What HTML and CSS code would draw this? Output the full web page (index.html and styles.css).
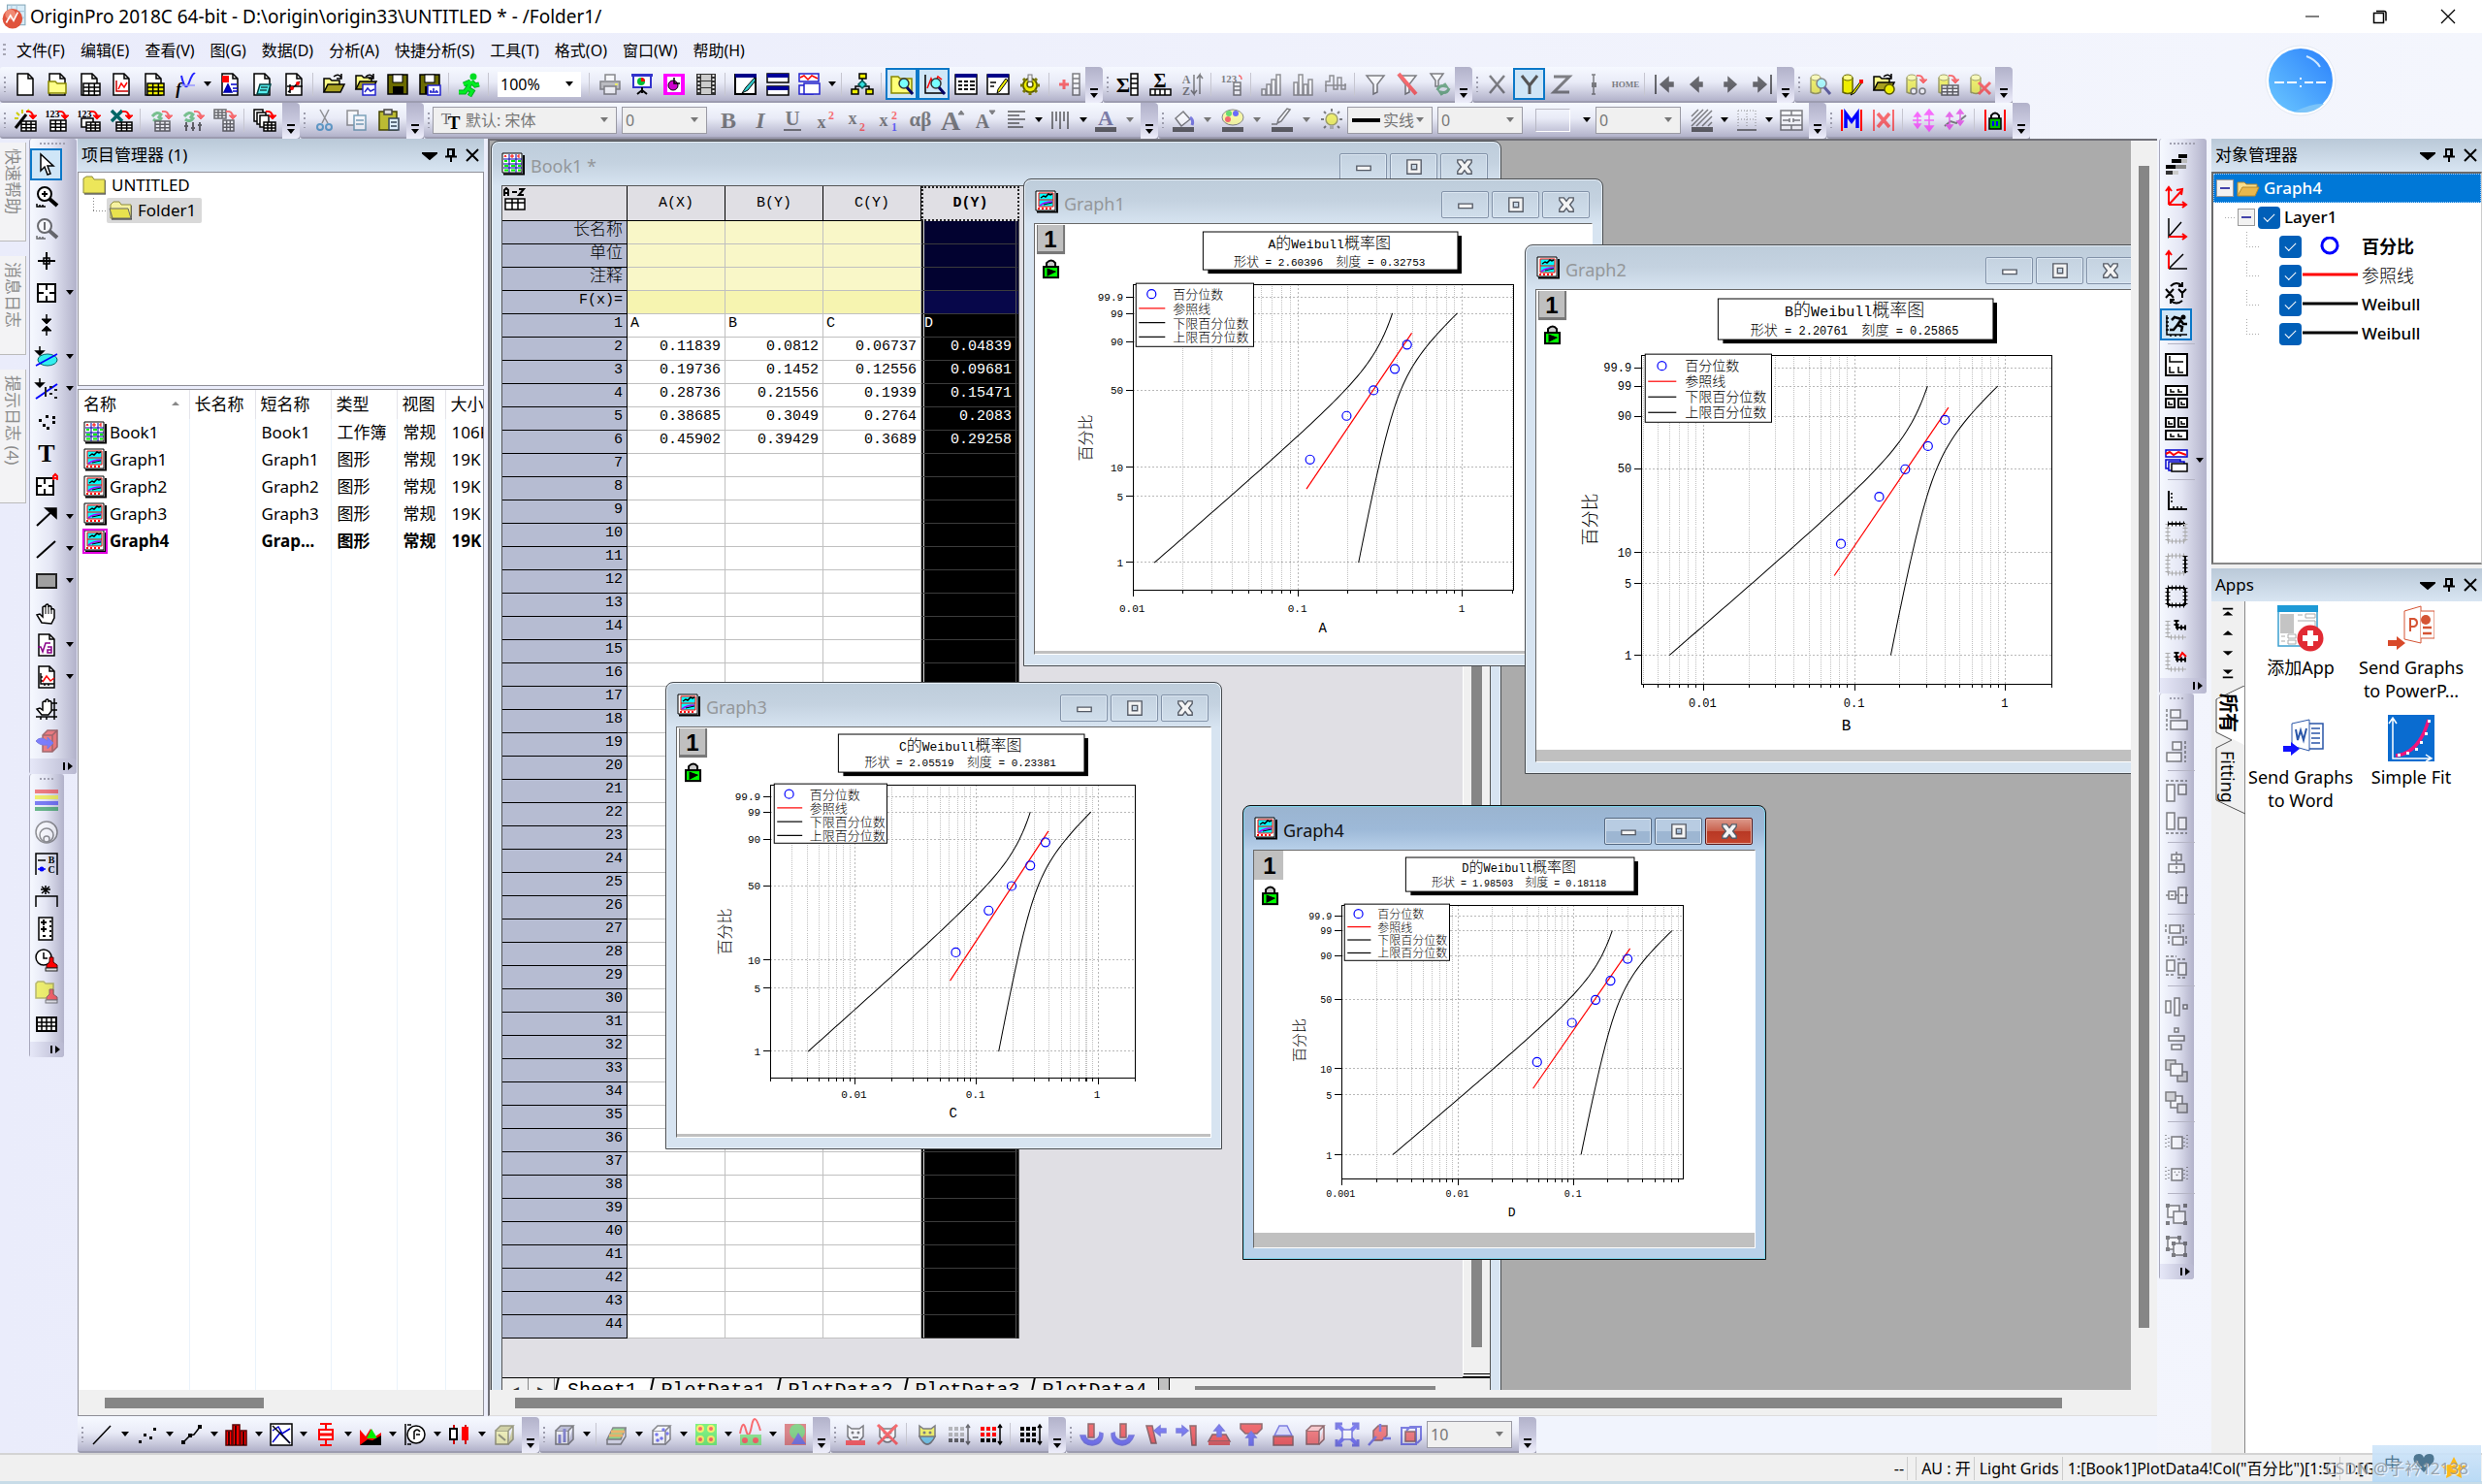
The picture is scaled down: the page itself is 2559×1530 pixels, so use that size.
FILE: index.html
```html
<!DOCTYPE html>
<html lang="zh-CN">
<head>
<meta charset="utf-8">
<title>OriginPro 2018C 64-bit</title>
<link rel="stylesheet" href="styles.css">
</head>
<body>
<header class="titlebar">
  <svg class="app-icon" viewBox="0 0 24 24"><rect x="6" y="1" width="17" height="19" fill="#d8ecf8" stroke="#8ab"/><path d="M10 1v19M15 1v19M6 7h17M6 13h17" stroke="#a9c8dc"/><circle cx="11" cy="14" r="9.500" fill="#e0533c"/><circle cx="9" cy="10" r="5" fill="#f08a74"/><path d="M5 18l4-7 3 5 4-8" stroke="#fff" fill="none" stroke-width="1.500"/></svg>
  <h1>OriginPro 2018C 64-bit - D:\origin\origin33\UNTITLED * - /Folder1/</h1>
  <div class="win-controls">
    <button aria-label="最小化"><svg viewBox="0 0 16 16"><path d="M1 8h14" stroke="#000" fill="none"/></svg></button>
    <button aria-label="还原"><svg viewBox="0 0 16 16"><path d="M1.500 4.500h10v10h-10zM4 2.500h8q2 0 2 2v8" stroke="#000" fill="none" stroke-width="1.500"/></svg></button>
    <button aria-label="关闭"><svg viewBox="0 0 16 16"><path d="M1 1l14 14M15 1L1 15" stroke="#000" fill="none" stroke-width="1.300"/></svg></button>
  </div>
</header>
<nav class="menubar">
  <i class="grip"></i>
  <button>文件(F)</button><button>编辑(E)</button><button>查看(V)</button><button>图(G)</button><button>数据(D)</button><button>分析(A)</button><button>快捷分析(S)</button><button>工具(T)</button><button>格式(O)</button><button>窗口(W)</button><button>帮助(H)</button>
</nav>
<div class="toolrows">
  <div class="toolrow">
    <div class="toolbar" data-items="new newfolder newbook newgraph newmatrix newfx> newlayout newnotes newexcel | open opentpl save savetpl | run | @zoom | print~ slide pink film | edit rows layers> | tree | find! findgraph! worksheet notes gear | addcol~"></div>
    <div class="toolbar" data-items="sumcol sumrow sort~ | setvalues~ | bars1~ bars2~ bars3~ | filter~ nofilter~ refilter~"></div>
    <div class="toolbar" data-items="axisX~ axisY! axisZ~ axisErr~ home~ | first~ prev~ next~ last~"></div>
    <div class="toolbar" data-items="dbfind~ dbedit dbopen dbview~ dbtable~ dbdelete~"></div>
  </div>
  <div class="toolrow padded">
    <div class="toolbar" data-items="wizard import1 import2 importx | redo1~ redo2~ redo3~ | clone"></div>
    <div class="toolbar" data-items="cut~ copy~ paste"></div>
    <div class="toolbar" data-items="@font @size bold~ italic~ underline~ sup~ sub~ supsub~ greek~ bigger~ smaller~ align~> vlines~> fontcolor~>>"></div>
    <div class="toolbar" data-items="bucket~>> palette~>> pencil~>> sun~ @line @width @swatch @width2 hatch~> border~> tablewidth~"></div>
    <div class="toolbar" data-items="maskM maskX~ | peak1~ peak2~ | lock"></div>
  </div>
</div>
<main class="main">
  <div class="dock-tabs"><button>快速帮助</button><button>消息日志</button><button class="long">提示日志 (4)</button></div>
  <div class="vcol">
    <div class="vbar" data-items="pointer! zoomin zoomout~ reader screenreader> selector ellipse> regional> scatterdots text annotate arrow> line> rect> hand formula> minigraph> handaxis rotatecube~"></div>
    <div class="vbar narrow" data-items="colorbars~ rings~ legendbc starbox scalebox clock stampfolder~ grid"></div>
  </div>
  <div class="center">
    <div class="workarea">
      <section class="project">
        <div class="panel-title"><h2>项目管理器 (1)</h2><span class="panel-tools"></span></div>
        <ul class="tree">
          <li><svg class="folder" viewBox="0 0 24 20"><use href="#folder"/></svg>UNTITLED
            <ul><li><span class="picked"><svg class="folder" viewBox="0 0 24 20"><use href="#folder-open"/></svg>Folder1</span></li></ul>
          </li>
        </ul>
        <div class="files">
          <table>
            <colgroup><col class="c1"><col class="c2"><col class="c3"><col class="c4"><col class="c5"><col></colgroup>
            <thead><tr><th>名称<i class="sort-mark"></i></th><th>长名称</th><th>短名称</th><th>类型</th><th>视图</th><th>大小</th></tr></thead>
            <tbody>
              <tr><td><svg class="mini"><use href="#i-book"/></svg>Book1</td><td></td><td>Book1</td><td>工作簿</td><td>常规</td><td>106K</td></tr>
              <tr><td><svg class="mini"><use href="#i-graph"/></svg>Graph1</td><td></td><td>Graph1</td><td>图形</td><td>常规</td><td>19K</td></tr>
              <tr><td><svg class="mini"><use href="#i-graph"/></svg>Graph2</td><td></td><td>Graph2</td><td>图形</td><td>常规</td><td>19K</td></tr>
              <tr><td><svg class="mini"><use href="#i-graph"/></svg>Graph3</td><td></td><td>Graph3</td><td>图形</td><td>常规</td><td>19K</td></tr>
              <tr class="current"><td><svg class="mini"><use href="#i-graph"/></svg>Graph4</td><td></td><td>Grap...</td><td>图形</td><td>常规</td><td>19K</td></tr>
              <tr class="filler"><td></td><td></td><td></td><td></td><td></td><td></td></tr>
            </tbody>
          </table>
        </div>
        <div class="hscroll"><i></i></div>
      </section>
      <section class="mdi">
        <div class="canvas">
          <article class="window book" style="left:1px;top:0;width:1042px;height:1318px">
            <header><svg class="mini"><use href="#i-book"/></svg><h3>Book1 *</h3><span class="win-btns"></span></header>
            <div class="book-body">
              <div class="sheet-area">
                <table class="sheet">
                  <thead><tr><th class="corner"><svg viewBox="0 0 24 24"><path d="M1 9V3l2-2 2 2v6M1 6h4M9 5h5M16 2h5l-5 6h5" stroke="#000" fill="none" stroke-width="2"/><path d="M2 12h20v11H2zM2 16h20M9 12v11M15 12v11" stroke="#000" fill="#fff" stroke-width="1.500"/></svg></th><th>A(X)</th><th>B(Y)</th><th>C(Y)</th><th class="sel">D(Y)</th></tr></thead>
                  <tbody id="rows"></tbody>
                </table>
              </div>
              <div class="book-vscroll"><i></i></div>
              <div class="sheet-tabs">
                <button class="step" aria-label="上一个">◂</button><button class="step" aria-label="下一个">▸</button>
                <button class="tab on">Sheet1</button><button class="tab">PlotData1</button><button class="tab">PlotData2</button><button class="tab">PlotData3</button><button class="tab">PlotData4</button>
                <span class="tab-end"></span><span class="tab-scroll"><i></i></span>
              </div>
            </div>
          </article>
          <article class="window" data-graph="A" style="left:550px;top:39px;width:598px;height:503px"></article>
          <article class="window" data-graph="B" style="left:1067px;top:107px;width:642px;height:546px"></article>
          <article class="window" data-graph="C" style="left:181px;top:558px;width:574px;height:482px"></article>
          <article class="window active" data-graph="D" style="left:776px;top:685px;width:540px;height:469px"></article>
        </div>
        <div class="mdi-v"><i></i></div>
        <div class="mdi-h"><i></i></div>
      </section>
    </div>
    <div class="toolrow bottom padded">
      <div class="toolbar" data-items="pline> pscatter> plinesym> pcolumn> pmulti> pbox> parea> ppolar> pcandle> pbook~"></div>
      <div class="toolbar" data-items="p3dbar~> | p3dsurf~> p3dscat~> pcontour~> pwave~> pimage~"></div>
      <div class="toolbar" data-items="mask1~ mask2~ | mask3~ swap1~ swap2 | swap3"></div>
      <div class="toolbar" data-items="rotl~ rotr~ tiltl~ tiltr~ up~ down~ persp~ box~ fit~ orient~ cube~ @ten"></div>
    </div>
  </div>
  <div class="vcol right">
    <div class="vbar" data-items="antialias axes1 axes2 axes3 exchange runner! | lay1 lay2 lay3 laystack> | fr1 fr2 fr3 fr4 fr5 fr6"></div>
    <div class="vbar narrow" data-items="al1~ al2~ | al3~ al4~ | al5~ al6~ | al7~ al8~ | al9~ al10~ front~ back~ | d1~ d2~ | group~ ungroup~"></div>
  </div>
  <aside class="side">
    <section class="objects">
      <div class="panel-title"><h2>对象管理器</h2><span class="panel-tools"></span></div>
      <div class="obj-tree">
        <div class="obj root"><span class="expander"></span><svg class="gold" viewBox="0 0 24 18"><path d="M1 17V3h7l2 2h11v3" fill="#f7dd8c" stroke="#b88a2a"/><path d="M1 17L6 8h17l-4 9z" fill="#e9b84c" stroke="#b88a2a"/></svg>Graph4</div>
        <label class="obj layer"><span class="expander"></span><input type="checkbox" checked>Layer1</label>
        <label class="obj plot"><input type="checkbox" checked><svg viewBox="0 0 57 20"><circle cx="28" cy="9" r="8" fill="none" stroke="#00f" stroke-width="3"/></svg><b>百分比</b></label>
        <label class="obj plot"><input type="checkbox" checked><svg viewBox="0 0 57 20"><path d="M0 9h57" stroke="red" stroke-width="3"/></svg><span>参照线</span></label>
        <label class="obj plot"><input type="checkbox" checked><svg viewBox="0 0 57 20"><path d="M0 9h57" stroke="#000" stroke-width="3"/></svg><em>Weibull</em></label>
        <label class="obj plot"><input type="checkbox" checked><svg viewBox="0 0 57 20"><path d="M0 9h57" stroke="#000" stroke-width="3"/></svg><em>Weibull</em></label>
      </div>
    </section>
    <section class="apps">
      <div class="panel-title"><h2>Apps</h2><span class="panel-tools"></span></div>
      <div class="apps-body">
        <div class="apps-tabs">
          <button aria-label="第一个"><svg viewBox="0 0 16 16"><path d="M2 3h12v2H2zM2 12l6-5 6 5z"/></svg></button>
          <button aria-label="上一个"><svg viewBox="0 0 16 16"><path d="M2 11l6-5 6 5z"/></svg></button>
          <button aria-label="下一个"><svg viewBox="0 0 16 16"><path d="M2 6l6 5 6-5z"/></svg></button>
          <button aria-label="最后一个"><svg viewBox="0 0 16 16"><path d="M2 12h12v2H2zM2 4l6 5 6-5z"/></svg></button>
          <svg class="outline" viewBox="0 0 35 140"><path d="M34 0L5 14v34l16 8-16 8v54l30 14" fill="none" stroke="#555"/><path d="M34 1L6 14v33l16 8 12 6z" fill="#fff"/></svg>
          <button class="vtab on">所有</button>
          <button class="vtab">Fitting</button>
        </div>
        <div class="apps-grid">
          <button class="app"><svg viewBox="0 0 48 48"><path d="M1 2h40v40H1z" fill="#fff" stroke="#3da0d0" stroke-width="1.500"/><path d="M0 0h42v7H0z" fill="#1e9ad6"/><path d="M3 9h14v20H3z" fill="#c4c4c4"/><path d="M21 10h5M29 9h10v4H29zM21 16h18v10M4 32h4M11 30h8v4h-8zM4 37h4M11 36h8v4h-8z" fill="none" stroke="#aaa"/><circle cx="34" cy="34" r="13.500" fill="#e12a33"/><path d="M31 26h6v5h5v6h-5v5h-6v-5h-5v-6h5z" fill="#fff"/></svg><span>添加App</span></button>
          <button class="app"><svg viewBox="0 0 48 48"><path d="M17 6L34 1v38l-17-4z" fill="#fff" stroke="#d55434"/><path d="M34 6h14v28H34" fill="#fff" stroke="#d55434"/><path d="M36 23h9M36 29h9" stroke="#d55434" stroke-width="2.500"/><circle cx="39" cy="15" r="5" fill="#d55434"/><path d="M23 27V14h4q3 1 3 4t-3 4h-4" fill="none" stroke="#d55434" stroke-width="2"/><path d="M0 36h9v-4l9 7-9 7v-4H0z" fill="#d8492a"/></svg><span>Send Graphs<br>to PowerP...</span></button>
          <button class="app"><svg viewBox="0 0 48 48"><path d="M15 9l18-4v32l-18-5z" fill="#fff" stroke="#2a56a8"/><path d="M33 9h14v26H33M35 14h9M35 19h9M35 24h9M35 29h9" fill="none" stroke="#2a56a8" stroke-width="1.500"/><path d="M19 15l2 11 3-10 3 10 3-12" fill="none" stroke="#2a56a8" stroke-width="2"/><path d="M6 32h8v-4l9 7-9 7v-4H6z" fill="#11f"/></svg><span>Send Graphs<br>to Word</span></button>
          <button class="app"><svg viewBox="0 0 48 48"><path d="M0 0h48v48H0z" fill="#0a6cd0"/><path d="M5 3v42h39M1 9l4-6 4 6M39 41l6 4-6 3" stroke="#fff" fill="none" stroke-width="1.500"/><path d="M8 42Q32 40 42 5" stroke="#f0147c" stroke-width="3.500" fill="none"/><path d="M10 40h3v3h-3zM19 38h3v3h-3zM28 34h3v3h-3zM33 27h3v3h-3zM38 18h3v3h-3zM41 5h3v3h-3z" fill="#fff"/></svg><span>Simple Fit</span></button>
        </div>
      </div>
    </section>
  </aside>
</main>
<footer class="status"><span>--</span><span></span><span>AU : 开</span><span>Light Grids</span><span>1:[Book1]PlotData4!Col("百分比")[1:5]</span><span class="last">1:[G</span></footer>
<div class="ime"><span>中</span><svg viewBox="0 0 60 30"><path d="M12 24L2 13q-2-8 5-8 4 0 5 4 1-4 6-4 6 0 4 8z" fill="#3d6b88"/><path d="M43 8l4 8 9 1-6 6 1 7-8-4-8 4 1-7-6-6 9-1z" fill="#ffb400"/></svg></div>
<div class="watermark">CSDN @子衿12138</div>
<svg class="ball" viewBox="0 0 76 76"><defs><linearGradient id="sky" x1="0" y1="1" x2="1" y2="0"><stop offset="0" stop-color="#6cc8ff"/><stop offset="1" stop-color="#2a80fc"/></linearGradient></defs><circle cx="38" cy="38" r="36" fill="#fff" stroke="#e4e9f3"/><circle cx="38" cy="38" r="33" fill="url(#sky)"/><path d="M32 70q18-9 30-8-12 12-30 8z" fill="#7cc4f8"/><path d="M44 13q9 3 14 11" stroke="#cfe8ff" stroke-width="2" fill="none"/><path d="M11 40h10M24 40h10M42 40h9M54 40h10M37 36h2M37 44h2" stroke="#fff" stroke-width="2"/></svg>
<svg class="defs" aria-hidden="true">
  <symbol id="folder" viewBox="0 0 24 20"><path d="M1 18V3l3-2h6l2 3h11v14z" fill="#ece65a" stroke="#8c8a3a"/><path d="M2 19h22V5" fill="none" stroke="#222"/></symbol>
  <symbol id="folder-open" viewBox="0 0 24 20"><path d="M2 18V4l3-3h6l2 3h10v13z" fill="#f6f2a0" stroke="#8c8a3a"/><path d="M1 8h19l3 10H4z" fill="#e8e24e" stroke="#666"/><path d="M3 19h21V5" fill="none" stroke="#222"/></symbol>
  <symbol id="i-book" viewBox="0 0 24 24"><path d="M1 1h20v20H1z" fill="#fff" stroke="#000"/><path d="M2 22.500h21V3" fill="none" stroke="#000" stroke-width="2"/><path d="M2 7h19M2 12h19M2 16h19M8 2v19M15 2v19" stroke="#00a"/><path d="M3 5l1-2 1 2M10 3h2v2h-2zM19 3h-2v2h2" stroke="red" fill="none"/><path d="M3 9h3M10 9h4M17 9h3M3 14h4M10 14h4M17 14h3M3 18.500h4M10 18.500h4M17 18.500h3" stroke="#0e0" stroke-width="2"/></symbol>
  <symbol id="i-graph" viewBox="0 0 24 24"><path d="M1 1h20v20H1z" fill="#fff" stroke="#000"/><path d="M2 22.500h21V3" fill="none" stroke="#000" stroke-width="2"/><path d="M4 3h15v14H4z" fill="#0ff" stroke="red"/><path d="M4 10h15" stroke="red"/><path d="M6 8l3-2 2 1 3-3 2 1 2-1" stroke="#000" fill="none" stroke-width="1.500"/><path d="M5 16q5-4 13-4" stroke="#a0f" fill="none" stroke-width="1.500"/><path d="M9 15l9-2" stroke="#000"/><path d="M3 19h16" stroke="red" stroke-dasharray="2 2" stroke-width="2"/></symbol>
</svg>
<script src="app.js"></script>
</body>
</html>
```

FILE: styles.css
```css
* { box-sizing: border-box; }
:root {
  --ui: "Noto Sans", "Noto Sans CJK SC", sans-serif;
  --mono: "Liberation Mono", "Noto Sans CJK SC", monospace;
  --pale: #eaecfb;
}
body { margin: 0; height: 100vh; overflow: hidden; display: flex; flex-direction: column; background: linear-gradient(90deg, #eaecfb, #f4f6fd); font: 17px/24px var(--ui); color: #000; }
button { background: none; border: 0; padding: 0; margin: 0; font: inherit; color: inherit; }
h1, h2, h3 { margin: 0; font-weight: 400; font-size: 17px; }
ul { list-style: none; margin: 0; padding: 0; }
.defs { position: absolute; width: 0; height: 0; }

.titlebar { flex: none; height: 34px; background: #fff; display: flex; align-items: center; padding-left: 1px; }
.app-icon { width: 26px; height: 26px; }
.titlebar h1 { flex: 1; margin-left: 4px; font-size: 19px; }
.win-controls { display: flex; }
.win-controls button { width: 70px; height: 34px; display: grid; place-items: center; }
.win-controls svg { width: 16px; height: 16px; }

.menubar { flex: none; height: 35px; display: flex; align-items: center; gap: 16px; padding-left: 3px; font-size: 16px; }
.menubar .grip { margin-right: -5px; width: 3px; height: 14px; background: repeating-linear-gradient(#a6a6b4 0 2px, transparent 2px 5px); }

.toolrows { flex: none; }
.toolrow { display: flex; height: 37px; }
.toolbar { display: flex; align-items: center; height: 37px; background: linear-gradient(#f6f9ff, #e9ebf7 45%, #b2b2ca); border-bottom: 2px solid #9c9cb0; border-radius: 3px 0 0 3px; flex: none; }
.toolbar .grip { width: 9px; height: 16px; background: repeating-linear-gradient(#9c9cac 0 2px, transparent 2px 5px) 4px 0 / 2px 100% no-repeat; }
.tool { width: 33px; height: 33px; display: grid; place-items: center; border: 2px solid transparent; flex: none; }
.tool svg { width: 24px; height: 24px; overflow: visible; }
.tool.off svg { opacity: .55; }
.tool.on { background: #cfe6f7; border-color: #0a78c8; }
.drop { width: 13px; height: 33px; display: grid; place-items: center; flex: none; }
.drop.wide { width: 18px; }
.drop::after, .combo::after { content: ""; border: 4px solid transparent; border-top: 5px solid #000; border-bottom: 0; }
.off + .drop.wide::after { border-top-color: #777; }
.sep { width: 8px; height: 24px; flex: none; background: linear-gradient(#c6c6d0, #c6c6d0) 3px 0 / 1px 100% no-repeat; }
.cap { width: 18px; align-self: stretch; margin-bottom: -2px; background: linear-gradient(#b2b2ca, #c8c8de 50%, #eeeefb); border-radius: 0 4px 4px 0; display: grid; place-items: end center; padding-bottom: 4px; flex: none; }
.padded .cap { margin-left: 2px; }
.cap svg { width: 10px; height: 12px; }
.combo { position: relative; display: flex; align-items: center; height: 28px; background: #f0f0f0; border: 1px solid #9a9aa4; color: #777; margin-right: 5px; }
.combo::after { position: absolute; right: 8px; border-top-color: #777; pointer-events: none; }
.combo select { appearance: none; border: 0; background: none; width: 100%; height: 100%; padding: 0 3px; font: 16px var(--ui); color: inherit; opacity: 1; }
.combo svg { width: 24px; height: 20px; flex: none; margin-left: 6px; }
.combo.zoom { width: 86px; margin: 0 5px; height: 26px; background: #fff; border: 0; color: #000; }
.combo.zoom::after { border-top-color: #000; }
.combo.font { width: 190px; }
.combo.mid { width: 88px; }
.combo.line svg { width: 29px; margin-left: 4px; }
.swatch { width: 36px; height: 24px; border: 1px solid #b8b8c4; border-right-color: #fff; border-bottom-color: #fff; margin: 0 8px; }

.main { flex: 1; min-height: 0; display: flex; }
.dock-tabs { width: 27px; margin-right: 3px; padding-top: 4px; display: flex; flex-direction: column; gap: 15px; flex: none; }
.dock-tabs button { height: 102px; background: #f3f3f5; border-right: 1px solid #bbb; border-bottom: 1px solid #bbb; writing-mode: vertical-rl; text-orientation: sideways; text-align: left; padding: 6px 0; color: #8c8c8c; line-height: 26px; }
.dock-tabs .long { height: 138px; }
.vcol { width: 50px; flex: none; }
.vbar { width: 49px; background: linear-gradient(90deg, #f6f9ff, #e4e6f4 45%, #b2b2ca); border-left: 1px solid #a8a8bc; border-radius: 3px; display: flex; flex-wrap: wrap; align-content: flex-start; }
.vbar.narrow { width: 36px; }
.vbar .grip { width: 100%; height: 10px; background: repeating-linear-gradient(90deg, #a0a0b0 0 2px, transparent 2px 4px) 10px 4px / 16px 2px no-repeat; }
.vbar:not(.narrow) .grip { background-size: 26px 2px; }
.vbar .tool { margin-right: 2px; }
.vbar .drop { width: 12px; }
.vbar .sep { width: 28px; height: 8px; margin-left: 8px; background: linear-gradient(#b4b4c4, #b4b4c4) 0 3px / 100% 1px no-repeat; }
.vbar .cap { width: 100%; height: 16px; margin: 2px 0 0; background: linear-gradient(90deg, #e6e8f8, #b8b8d0); place-items: center end; padding: 0 4px 0 0; }
.vbar .cap svg { transform: rotate(-90deg); }
.center { flex: 1; min-width: 0; display: flex; flex-direction: column; }
.workarea { flex: 1; min-height: 0; display: flex; gap: 3px; }
.bottom { flex: none; height: 38px; padding-top: 1px; background: #f1f4fd; }

.panel-title { height: 34px; display: flex; align-items: center; justify-content: space-between; padding: 0 4px; background: linear-gradient(#bac9d8, #d8e5f2); flex: none; }
.panel-tools { display: flex; gap: 6px; }
.panel-tools button { width: 16px; height: 16px; }
.panel-tools svg { display: block; width: 16px; height: 16px; }
.project { width: 419px; flex: none; display: flex; flex-direction: column; margin-right: 1px; }
.tree { height: 221px; background: #fff; border: 1px solid #909098; padding: 0 4px; flex: none; }
.tree li { line-height: 26px; }
.tree ul { margin-left: 11px; padding-left: 14px; background: repeating-linear-gradient(90deg, #888 0 1px, transparent 1px 3px) 0 13px / 14px 1px no-repeat, repeating-linear-gradient(#888 0 1px, transparent 1px 3px) 0 0 / 1px 13px no-repeat; }
.folder { width: 24px; height: 20px; margin-right: 6px; vertical-align: -4px; }
.picked { display: inline-block; background: #d9d9d9; padding: 0 6px 0 2px; border-radius: 2px; }
.files { flex: 1; min-height: 0; margin-top: 3px; background: #fff; border: 1px solid #909098; border-bottom: 0; overflow: hidden; }
.files table { table-layout: fixed; width: 500px; height: 100%; border-collapse: collapse; }
.c1 { width: 114px; } .c2 { width: 68px; } .c3 { width: 78px; } .c4 { width: 68px; } .c5 { width: 50px; }
.files th { height: 30px; font-weight: 400; text-align: left; padding: 0 5px; border-right: 1px solid #e4e4ea; position: relative; white-space: nowrap; }
.files td { height: 28px; padding: 0 6px; border-right: 1px solid #eaf3fb; white-space: nowrap; }
.files td:first-child { padding-left: 5px; }
.files .filler td { height: auto; }
.sort-mark { position: absolute; right: 10px; top: 12px; border: 4px solid transparent; border-bottom: 4px solid #888; border-top: 0; }
.mini { width: 24px; height: 24px; vertical-align: -6px; margin-right: 3px; flex: none; }
.current { font-weight: 700; }
.current .mini { outline: 2px solid #e000e0; outline-offset: -1px; }
.hscroll { height: 27px; background: #f0f0f0; border: 1px solid #909098; border-top: 0; padding: 8px 27px; flex: none; }
.hscroll i { display: block; width: 164px; height: 11px; background: #868686; }

.mdi { flex: 1; min-width: 0; display: grid; grid-template: 1fr 26px / 1fr 27px; background: #f0f0f0; border: 2px solid #707078; border-right: 0; border-bottom: 1px solid #ddd; }
.canvas { position: relative; overflow: hidden; background: #ababab; }
.mdi-v { padding: 26px 8px 64px; }
.mdi-h { grid-column: 1 / 3; padding: 8px 98px 7px 26px; }
.mdi-v i, .mdi-h i { display: block; height: 100%; background: #868686; }
.window { position: absolute; display: flex; flex-direction: column; border: 1px solid #484c50; border-radius: 8px 8px 0 0; padding: 0 10px 11px; background: linear-gradient(#becddb, #c4d2e0 22px, #d7e4f1 46px); box-shadow: inset 0 0 0 1px #e8f0f8; }
.window.active { border-color: #111; background: linear-gradient(#9ab4d0, #9db9d8 24px, #b9d1ea 46px); box-shadow: inset 0 0 0 1px #7fd3ea; }
.window header { height: 45px; display: flex; align-items: center; padding: 5px 3px 0 1px; flex: none; }
.window header h3 { flex: 1; margin-left: 3px; font-size: 18px; line-height: 24px; color: #94979a; }
.window header .mini { margin-top: -5px; }
.window.active h3 { color: #111; }
.win-btns { display: flex; gap: 3px; align-self: flex-start; margin-top: 7px; }
.win-btns button { width: 49px; height: 28px; display: grid; place-items: center; border: 1px solid #8292a8; border-radius: 2px; background: linear-gradient(#c4d2e0, #d0deeb); box-shadow: inset 0 0 0 1px #dce7f2; }
.win-btns svg { width: 18px; height: 18px; }
.active .win-btns button { border-color: #556880; background: linear-gradient(#b8cce2 50%, #9db6d2 50%); }
.active .win-btns button:last-child { border-color: #5a1a1a; background: linear-gradient(#dd9a8c, #c8604c 50%, #b83824 50%, #c4442c); box-shadow: inset 0 0 0 1px #e8b0a4; }
.page { flex: 1; min-height: 0; background: #c0c0c0; border: 1px solid #696969; border-right-color: #fff; border-bottom-color: #fff; }
.page svg { display: block; width: 100%; height: 100%; }
.page text { font-family: var(--mono); font-weight: 300; }
.page .layer-no { font-family: "Liberation Sans", sans-serif; font-weight: 700; }
.window.book header { padding-left: 0; }
.book-body { flex: 1; min-height: 0; display: grid; grid-template: 1228px 1fr / 1fr 28px; border: 1px solid #555; }
.sheet-area { background: #e0dfe4; overflow: hidden; }
.sheet { table-layout: fixed; width: 533px; border-collapse: separate; border-spacing: 0; font: 15px/20px var(--mono); background: #fff; }
.sheet th, .sheet td { height: 24px; padding: 0 4px 3px; text-align: right; border-right: 1px solid #c0c0c0; border-bottom: 1px solid #c0c0c0; width: 101px; white-space: nowrap; }
.sheet thead th { height: 36px; background: #e0dfe4; text-align: center; font-weight: 400; border-right: 1px solid #000; border-bottom: 1px solid #000; padding: 0; }
.sheet thead th.corner { text-align: left; width: 129px; }
.corner svg { width: 24px; height: 24px; display: block; margin: -10px 0 0 1px; }
.sheet thead th.sel { font-weight: 700; border: 2px dotted #222; }
.sheet tbody th { width: 129px; background: #b6bcd2; font-weight: 400; border-right: 1px solid #000; border-bottom: 1px solid #000; }
.sheet tbody th.cjk { font-size: 17px; font-weight: 300; }
.sheet .label td { background: #f9f7c8; }
.sheet .fx td { background: #f6f4b0; }
.sheet td.txt { text-align: left; padding-left: 3px; }
.sheet tbody td.sel { background: #000; color: #fff; border-right: 4px double #555; border-bottom-color: #3c3c3c; box-shadow: inset 2px 0 #000, inset 3px 0 #ddd; }
.sheet .label td.sel { background: #020230; }
.sheet .fx td.sel { background: #07074a; }
.book-vscroll { background: #f0f0f0; border-left: 1px solid #fff; border-bottom: 4px double #000; padding: 12px 8px 27px; }
.book-vscroll i { display: block; height: 100%; background: #868686; }
.sheet-tabs { grid-column: 1 / 3; display: flex; align-items: flex-start; background: #f0f0f0; border-top: 1px solid #000; font: 20px/26px var(--mono); height: 30px; }
.step { width: 27px; height: 26px; border-right: 1px solid #888; color: #333; }
.tab { position: relative; height: 26px; width: 131px; }
.tab::before { content: ""; position: absolute; left: 0; top: 0; height: 26px; border-left: 2px solid #000; transform: skewX(-12deg); }
.tab.on { width: 98px; background: #fff; }
.tab-end { width: 12px; height: 30px; background: #c0c0c0; border-left: 1px solid #000; border-right: 1px solid #000; }
.tab-scroll { width: 300px; padding: 8px 26px; }
.tab-scroll i { display: block; height: 11px; background: #868686; }

.vcol.right { margin-left: 2px; width: 54px; }
.side { width: 279px; flex: none; display: flex; flex-direction: column; background: #f0f0f0; }
.obj-tree { height: 405px; background: #fff; border: 2px solid #6a6a6a; border-right: 1px solid #ccc; border-bottom-color: #888; font-size: 17px; }
.obj { height: 30px; display: flex; align-items: center; }
.obj.root { background: #0078d7; color: #fff; padding-left: 3px; font-weight: 500; outline: 1px dotted #9cf; outline-offset: -1px; }
.gold { width: 24px; height: 20px; margin: 0 4px 0 3px; }
.expander { width: 18px; height: 18px; background: linear-gradient(#44a, #44a) 3px 7px / 10px 2px no-repeat, #f2f2f2; border: 1px solid #999; }
.obj.layer { padding-left: 25px; font-weight: 500; background: repeating-linear-gradient(90deg, #aaa 0 1px, transparent 1px 3px) 12px 15px / 12px 1px no-repeat; }
.obj.plot { padding-left: 68px; background: repeating-linear-gradient(#aaa 0 1px, transparent 1px 3px) 34px 0 / 1px 50% no-repeat, repeating-linear-gradient(90deg, #aaa 0 1px, transparent 1px 3px) 34px 15px / 14px 1px no-repeat; }
.obj.plot svg { width: 57px; height: 20px; margin: 0 4px 0 1px; }
.obj b { font-weight: 700; font-size: 18px; }
.obj.plot > span { font-weight: 300; font-size: 18px; }
.obj em { font-style: normal; font-weight: 500; }
.obj input { appearance: none; width: 23px; height: 23px; margin: 0; background: #005fb8; border-radius: 4px; display: grid; place-items: center; flex: none; }
.layer input { margin: 0 4px 0 3px; }
.obj input::before { content: ""; width: 10px; height: 5px; border-left: 1px solid #fff; border-bottom: 1px solid #fff; transform: rotate(-45deg); margin-bottom: 3px; }
.objects { margin-bottom: 4px; }
.apps { flex: 1; min-height: 0; display: flex; flex-direction: column; }
.apps-body { flex: 1; display: flex; }
.apps-tabs { position: relative; width: 34px; display: flex; flex-direction: column; align-items: center; }
.apps-tabs button:not(.vtab) { height: 21px; width: 16px; }
.apps-tabs button svg { width: 14px; height: 14px; }
.outline { position: absolute; top: 87px; left: 0; width: 35px; height: 140px; }
.vtab { position: relative; writing-mode: vertical-rl; text-orientation: sideways; font-size: 18px; line-height: 26px; height: 70px; }
.vtab.on { font-weight: 700; font-size: 20px; height: 62px; }
.apps-grid { flex: 1; background: #fff; border-left: 1px solid #888; display: grid; grid-template-columns: 114px 114px; align-content: start; padding-top: 4px; row-gap: 13px; }
.app { display: flex; flex-direction: column; align-items: center; justify-content: flex-start; gap: 4px; font-size: 18px; line-height: 24px; white-space: nowrap; min-height: 100px; }
.app svg { width: 48px; height: 48px; flex: none; }

.status { flex: none; height: 32px; background: #f0f0f0; border-top: 2px solid #d4d4d4; border-bottom: 3px solid #c8dce8; display: flex; justify-content: flex-end; align-items: center; white-space: nowrap; }
.status span { padding: 0 3px 0 5px; border-right: 1px solid #ccc; height: 24px; font-size: 16px; }
.status .last { width: 146px; border: 0; }
.ime { position: absolute; right: 1px; bottom: 2px; width: 112px; height: 38px; display: flex; align-items: center; gap: 12px; padding-left: 12px; background: linear-gradient(#d0e6fa, #b4d8f6); color: #3d6b88; opacity: .9; }
.ime svg { width: 60px; height: 30px; }
.watermark { position: absolute; right: 14px; bottom: 4px; color: #8c939a; opacity: .8; font-size: 17px; text-shadow: 1px 1px #fff; }
.ball { position: absolute; right: 149px; top: 45px; width: 76px; height: 76px; }
```

FILE: app.js
```js
const r = (x, y, w, h, f = 'none', s = 'none', sw = 1.5) => `<rect x="${x}" y="${y}" width="${w}" height="${h}" fill="${f}" stroke="${s}" stroke-width="${sw}"/>`;
const p = (d, s = '#000', f = 'none', w = 1.5) => `<path d="${d}" stroke="${s}" fill="${f}" stroke-width="${w}"/>`;
const c = (x, y, q, f = 'none', s = 'none', w = 1.5) => `<circle cx="${x}" cy="${y}" r="${q}" fill="${f}" stroke="${s}" stroke-width="${w}"/>`;
const t = (x, y, s, str, f = '#000', extra = '') => `<text x="${x}" y="${y}" font-size="${s}" fill="${f}" text-anchor="middle" font-family="Liberation Serif, serif" ${extra}>${str}</text>`;
const bold = 'font-weight="bold"';

/* shared shapes */
const doc = p('M4 1h11l5 5v17H4z', '#000', '#fff') + p('M15 1v5h5');
const table = (x, y, w, h, f = '#fff', s = '#000') => r(x, y, w, h, f, s) + p(`M${x} ${y + h / 3}h${w}M${x} ${y + 2 * h / 3}h${w}M${x + w / 3} ${y}v${h}M${x + 2 * w / 3} ${y}v${h}`, s);
const redArrow = p('M13 3q7-1 7 6', 'red', 'none', 2) + p('M16 7h8l-4 4z', 'red', 'red', 1);
const folder = (y = 6) => p(`M2 ${y + 14}V${y}h6l2 2h8v4`, '#000', '#ff8') + p(`M2 ${y + 14}l4-8h17l-4 8z`, '#000', '#a8a020');
const jump = p('M12 4q5-4 8 1M20 1v5h-5', '#000', 'none', 1.5);
const disk = r(2, 2, 20, 20, '#6b6b00', '#000') + r(7, 2, 10, 8, '#fff', '#000', 1) + r(7, 14, 11, 8, '#000');
const lens = c(14, 11, 5, '#7ff', '#333') + p('M17 15l6 7', '#006', 'none', 3);
const cyl = p('M3 5v15q5 3 10 0V5', '#660', '#ee0') + '<ellipse cx="8" cy="5" rx="5" ry="3" fill="#ff8" stroke="#660"/>';
const glass = c(10, 9, 7, '#fff', '#000', 2) + p('M15 14l8 7', '#000', 'none', 4) + p('M2 19v3h9M5 20v2M8 20v2');
const cubeF = (f, s, g = f) => p('M3 8h13v14H3z', s, f) + p('M3 8l5-5h13l-5 5M21 3v14l-5 5', s, g);
const recyc = p('M3 8q5-6 9-2l-3 4M13 9q-4 6-9 2', '#1a9a3a', 'none', 3);
const stamp = p('M15 9h4v5l4 3v3H12v-3l3-3z', '#400', 'red', 1) + r(11, 20, 12, 3, '#ddd', '#222', 1);
const mask = p('M4 3l4 3h8l4-3v11q-4 6-8 6t-8-6z', '#222', '#fff') + c(9, 10, 1.5, '#222') + c(15, 10, 1.5, '#222') + p('M9 15h6');
const dots3 = f => [3, 9, 15].map(x => r(x - 2, 4, 4, 4, f) + r(x - 2, 10, 4, 4, f) + r(x - 2, 16, 4, 4, '#000')).join('') + p('M21 3v18M19 5l2-3 2 3M19 19l2 3 2-3', '#000');
const Gy = '#444';

const icons = {
  new: doc, newfolder: doc + p('M3 21V9h7l2 2h9v10z', '#880', '#ff8'), newbook: doc + table(6, 11, 17, 12),
  newgraph: doc + p('M7 8v11h12', '#c00') + p('M9 17l3-6 3 4 3-5', 'red'), newmatrix: doc + table(6, 11, 17, 12, '#ee0'),
  newfx: p('M8 3q4 18 8 7t6-9', '#22f', 'none', 2) + t(5, 22, 17, 'f', '#000', bold + ' font-style="italic"') + p('M8 13h14', '#99f'),
  newlayout: doc + r(4, 3, 7, 7, 'red') + p('M6 20l4-8 4 8z', '#00a', '#00c') + p('M13 12h6M15 16h5M15 19h5', '#00c'),
  newnotes: doc + p('M7 22l3-10h11l-3 10z', '#044', '#5ee') + p('M11 15h7M10 18h7', '#000', 'none', 1),
  newexcel: doc + p('M6 20l12-11M8 12v9M5 14h16', '#000') + c(10, 16, 2, 'red') + c(16, 11, 2, 'red'),
  open: folder() + jump, opentpl: folder(3) + jump + r(9, 12, 13, 11, '#fff', '#22c') + p('M11 20l3-4 3 3 4-2', '#22c'),
  save: disk, savetpl: disk + r(10, 13, 13, 10, '#fff', '#22c') + p('M12 20h9M13 18v2M16 16v4M19 18v2', '#22c'),
  run: c(16, 4, 3.5, '#0d2') + p('M14 9l-4 7 5 3-3 5M13 9l-7 3M14 9l4 4 4-1M10 16l-3 4H1', '#0a2', 'none', 5) + p('M14 9l-4 7 5 3-3 5M13 9l-7 3M14 9l4 4 4-1M10 16l-3 4H1', '#0e2', 'none', 3),
  print: p('M7 8V2h10v6', '#333', '#fff') + r(2, 9, 20, 8, '#999', '#333') + r(6, 14, 12, 8, '#fff', '#333') + r(17, 11, 3, 2, '#ee0'),
  slide: r(3, 3, 18, 12, '#fff', '#33c', 2) + r(1, 1, 22, 3, '#33c') + c(11, 9, 4, '#0b3') + p('M11 9V5a4 4 0 0 1 4 4z', 'none', 'red') + p('M12 15v6M7 22l5-4 5 4', '#000', 'none', 2),
  pink: r(1, 1, 22, 22, '#f0f') + r(5, 4, 14, 16, '#fff') + c(11, 13, 5, '#c0c', '#000', 1) + p('M12 5v6h6'),
  film: r(2, 1, 20, 22, '#333') + r(7, 2, 10, 6, '#ccc') + r(7, 9, 10, 6, '#ccc') + r(7, 16, 10, 6, '#ccc') + p('M4.500 2v20M19.500 2v20', '#fff', 'none', 2).replace('/>', ' stroke-dasharray="2 2"/>'),
  edit: r(1, 2, 21, 20, '#fff', '#000', 2) + r(1, 1, 22, 4, '#008') + p('M21 5l-9 10-4 6 6-3 8-10z', '#000', '#3cc', 1),
  rows: r(1, 1, 22, 9, '#fff', '#000') + r(1, 1, 22, 4, '#009') + r(1, 14, 22, 9, '#fff', '#000') + r(1, 14, 22, 4, '#009'),
  layers: r(1, 1, 20, 8, '#fff', '#22c') + p('M2 5l4-2 4 4 4-4 6 3', 'red') + r(1, 13, 14, 9, '#fff', '#22c') + r(6, 11, 16, 11, '#fff', '#22c'),
  tree: r(9, 1, 7, 5, '#ee0', '#000') + p('M12 6v3M5 18v-4h14v4') + p('M12 8l4 4-4 4-4-4z', '#055', '#3dd') + r(1, 17, 7, 5, '#ee0', '#000') + r(16, 17, 7, 5, '#ee0', '#000'),
  find: p('M1 21V4h7l2 2h12v15z', '#880', '#ff7') + lens, findgraph: p('M3 2v19h18') + p('M5 16l4-10 3 7 4-9 4 3', 'red') + lens,
  worksheet: r(1, 2, 22, 20, '#fff', '#000') + r(1, 1, 22, 4, '#008') + p('M4 9h4M10 9h4M16 9h5M4 13h4M10 13h4M16 13h5M4 17h4M10 17h4M16 17h5', '#000', 'none', 2),
  notes: r(1, 2, 22, 20, '#fff', '#000') + r(1, 1, 22, 4, '#008') + p('M4 10h6M4 14h4') + p('M20 6l-8 11-1 4 3-2 8-11z', '#000', '#ee0', 1),
  gear: c(12, 13, 7, '#dd0', '#550', 2) + p('M12 3v4M12 19v4M2 13h4M18 13h4M5 6l3 3M16 17l3 3M19 6l-3 3M5 20l3-3', '#770', 'none', 3) + c(12, 13, 6, '#ee0') + c(12, 12, 3, '#fff', '#550') + r(10, 2, 4, 7, '#eee', '#777', 1),
  addcol: p('M1 12h10M6 7v10', 'red', 'none', 3) + r(15, 1, 7, 22, '#fff', '#222') + p('M15 6h7M15 11h7M15 16h7', '#222'),
  sumcol: t(7, 20, 22, 'Σ', '#000', bold) + r(15, 1, 7, 22, '#fff', '#000') + p('M15 6h7M15 11h7M15 16h7'),
  sumrow: t(12, 15, 20, 'Σ', '#000', bold) + r(2, 17, 21, 6, '#fff', '#000') + p('M7 17v6M12 17v6M17 17v6'),
  sort: t(6, 11, 12, 'A', '#222', bold) + t(6, 23, 12, 'Z', '#222', bold) + p('M14 2v20l-3-4M14 22l3-4M20 22V2l-3 4M20 2l3 4', '#222'),
  setvalues: t(9, 10, 11, '123', '#222', bold) + r(14, 10, 7, 13, '#fff', '#222') + p('M14 14h7M14 18h7', '#222') + p('M19 3q3 0 3 4', 'red'),
  bars1: [2, 7, 12, 17].map((x, i) => r(x, 17 - i * 5, 4, 6 + i * 5, '#fff', Gy)).join(''),
  bars2: [2, 7, 12, 17].map((x, i) => r(x, [10, 2, 12, 7][i], 4, [13, 21, 11, 16][i], '#fff', Gy)).join(''),
  bars3: p('M2 20V9h4v-6h4v14h4V5h4v12h4v-6', Gy) + p('M1 13h22', Gy),
  filter: p('M3 3h18l-7 9v8l-4 2V12z', '#222', '#fff'), nofilter: p('M3 3h18l-7 9v8l-4 2V12z', '#222', '#fff') + p('M3 1l18 21', 'red', 'none', 4),
  refilter: p('M3 1h13l-5 7v6H8V8z', '#222', '#fff') + p('M10 18q2-6 9-4l-2-3M22 16q-2 6-9 4l2 3', '#1a7a3a', 'none', 3),
  axisX: p('M4 3l15 18M19 3L4 21', '#222', 'none', 2.5), axisY: p('M4 3l8 10L20 3M12 13v9', '#555', 'none', 3), axisZ: p('M4 4h16L4 20h16', '#222', 'none', 3),
  axisErr: p('M12 2v20M10 2h4M10 22h4', '#222') + r(10, 10, 5, 5, '#222'), home: t(12, 15, 9, 'HOME', '#222', bold),
  first: p('M2 2v20', '#000', 'none', 2) + p('M7 12l8-7v5h5v4h-5v5z', '#000', '#000'), prev: p('M5 12l8-7v5h4v4h-4v5z', '#000', '#000'),
  next: p('M19 12l-8-7v5H7v4h4v5z', '#000', '#000'), last: p('M22 2v20', '#000', 'none', 2) + p('M17 12L9 5v5H4v4h5v5z', '#000', '#000'),
  dbfind: cyl + lens, dbedit: cyl + p('M22 8L13 20l-2 3 4-2 8-11z', '#000', '#ee0', 1) + r(20, 7, 4, 4, 'red'),
  dbopen: folder(4) + jump + c(18, 17, 5, '#ee0', '#550'), dbview: cyl + redArrow + c(10, 19, 3, '#fff', '#333') + c(19, 19, 3, '#fff', '#333'),
  dbtable: cyl + redArrow + table(6, 13, 17, 10), dbdelete: cyl + p('M11 10l12 12M23 10L11 22', 'red', 'none', 3),
  wizard: p('M2 20L13 6', '#000', 'none', 3) + p('M3 4l3 3M9 1v4M14 3l2-2M1 10h4', '#cc0', 'none', 2) + redArrow + table(8, 13, 15, 10),
  import1: t(7, 9, 10, '123', '#000', bold) + redArrow + table(5, 12, 16, 11), import2: t(7, 9, 10, '123', '#000', bold) + redArrow + r(4, 10, 12, 9, '#fff', '#000') + table(9, 14, 14, 9),
  importx: p('M2 2l11 11M13 2L2 13', '#066', 'none', 3.5) + redArrow + table(7, 14, 16, 9),
  redo1: recyc + redArrow + table(6, 13, 15, 10), redo2: recyc + redArrow + p('M5 14v9M12 14v9M19 14v9M3 18h4M10 20h4M17 17h4', '#000', 'none', 2),
  redo3: table(1, 1, 12, 9) + redArrow + table(10, 12, 11, 11), clone: r(1, 1, 9, 12, '#fff', '#000') + r(4, 4, 9, 12, '#fff', '#000') + r(7, 7, 9, 12, '#fff', '#000') + redArrow + table(11, 14, 12, 9),
  cut: p('M7 1l8 14M16 1L9 15', '#444') + c(7, 19, 3, 'none', '#06a', 2) + c(16, 19, 3, 'none', '#06a', 2),
  copy: r(2, 2, 11, 15, '#fff', '#444') + r(9, 7, 12, 15, '#fff', '#268') + p('M11 12h8M11 16h8', '#268'),
  paste: r(2, 3, 18, 19, '#bb3', '#440') + r(7, 1, 8, 5, '#ddd', '#444') + p('M12 10h10v12H12z', '#345', '#def') + p('M14 14h6M14 18h6', '#345'),
  bold: t(12, 20, 24, 'B', '#222', bold), italic: t(12, 20, 24, 'I', '#222', bold + ' font-style="italic"'), underline: t(12, 17, 21, 'U', '#222', bold) + p('M3 22h18', '#222', 'none', 2),
  sup: t(9, 20, 18, 'x', '#222', bold) + t(19, 11, 12, '2', 'red', bold), sub: t(8, 16, 18, 'x', '#222', bold) + t(18, 23, 12, '2', 'red', bold),
  supsub: t(7, 18, 18, 'x', '#222', bold) + t(18, 11, 12, '2', 'red', bold) + t(18, 23, 12, '1', '#00f', bold), greek: t(12, 18, 21, 'αβ', '#222', bold),
  bigger: t(10, 22, 28, 'A', '#222', bold) + p('M18 6l3-4 3 4z', '#222', '#222', 1), smaller: t(10, 20, 20, 'A', '#222', bold) + p('M17 2l3 4 3-4z', '#222', '#222', 1),
  align: p('M3 3h18M3 7h12M3 11h18M3 15h12M3 19h16', '#222', 'none', 2), vlines: p('M3 3v18M7 3v10M11 3v18M15 3v10M19 3v18', '#222', 'none', 2),
  fontcolor: t(12, 17, 22, 'A', '#226', bold) + r(1, 19, 22, 5, '#000'),
  bucket: p('M4 10l8-7 7 8-9 7z', '#222', '#fff') + p('M19 9q4 3 2 8', '#22c', 'none', 3) + r(1, 19, 22, 5, '#000'),
  palette: '<ellipse cx="12" cy="9" rx="11" ry="8" fill="#ff6" stroke="#333"/>' + c(8, 5, 3, '#0c0') + c(15, 5, 3, '#00f') + c(7, 11, 3, 'red') + r(1, 19, 22, 5, '#000'),
  pencil: p('M20 1l-9 12-4 2 1-4L17 0z', '#222', '#fff') + p('M1 16h6', '#222') + r(1, 19, 22, 5, '#000'),
  sun: c(12, 11, 6, '#ee0', '#660') + r(10, 17, 4, 4, '#888') + p('M12 0v3M1 11h3M20 11h3M4 3l2 2M20 3l-2 2M4 20l2-2M20 20l-2-2', '#222', 'none', 2),
  hatch: p('M1 8l7-7M1 13L13 1M1 18L18 1M6 18L22 2M12 18L22 8M18 18l4-4', '#222') + r(1, 19, 22, 5, '#000'),
  border: p('M3 2h18M3 2v18M12 2v18M21 2v18M3 11h18', '#777').replace('/>', ' stroke-dasharray="1 2"/>') + p('M2 22h20', '#222', 'none', 2),
  tablewidth: r(1, 2, 22, 20, '#fff', '#222') + p('M1 7h22M1 17h22M12 2v5M12 17v5M3 12h7M14 12h7M10 10v4M14 10v4', '#222'),
  maskM: p('M2 1v22M22 1v22', 'red', 'none', 2) + p('M6 20V5l6 8 6-8v15', '#00f', 'none', 3.5), maskX: p('M2 1v22M22 1v22', 'red', 'none', 2) + p('M6 5l12 14M18 5L6 19', 'red', 'none', 3.5),
  peak1: p('M1 12h9M13 12h10', '#f0f', 'none', 1.5) + p('M6 6v13M18 4v17M3 8l3-4 3 4zM14 6l4-5 4 5zM3 16l3 4 3-4zM14 18l4 5 4-5z', '#f0f', '#f0f', 1.5), peak2: p('M1 18l6-5 6 2 10-8', '#222', 'none', 2) + p('M6 6v13M17 3v12M3 8l3-4 3 4zM14 5l3-4 3 4zM3 17l3 4 3-4zM14 13l3 4 3-4z', '#d0d', '#d0d', 1.5),
  lock: p('M2 1v22M22 1v22', 'red', 'none', 2) + p('M8 10V7q4-5 8 0v3', '#000', 'none', 2) + r(6, 10, 12, 11, '#0b0', '#000') + r(9, 13, 2, 5, '#00f') + r(13, 13, 2, 5, '#00f'),
  pointer: p('M6 1v17l4-4 3 8 3-1-3-8h6z', '#000', '#fff'), zoomin: glass + p('M7 9h6M10 6v6', '#000', 'none', 2), zoomout: glass + p('M10 5v8', '#000', 'none', 2),
  reader: p('M12 3v18M3 12h18', '#000', 'none', 2) + r(9, 9, 6, 6, 'none', '#000', 1.5), screenreader: r(3, 3, 18, 18, '#fff', '#000', 2) + p('M12 3v6M12 15v6M3 12h6M15 12h6', '#000', 'none', 2),
  selector: p('M12 1v6M12 17v6') + p('M7 6h10l-5 5zM7 18h10l-5-5z', '#000', '#000', 1),
  ellipse: '<ellipse cx="13" cy="15" rx="10" ry="6" fill="#3ee" stroke="#066"/>' + p('M1 21L23 9', '#00f') + p('M5 1v7M1 6h8l-4 4z', '#000', '#000'),
  regional: p('M1 22L23 7', '#00f', 'none', 2) + p('M5 1v7M1 6h8l-4 4z', '#000', '#000') + p('M11 10v10M15 10h3M15 17h3M20 13h3M20 21h3', '#222', 'none', 2),
  scatterdots: [[4, 10], [11, 6], [18, 7], [8, 15], [12, 18], [18, 12]].map(a => r(a[0], a[1], 3, 3, '#000')).join(''), text: t(12, 21, 26, 'T', '#000', bold),
  annotate: r(2, 5, 17, 17, '#fff', '#000', 2) + p('M10 5v6M10 16v6M2 13h5M14 13h5', '#000', 'none', 2) + p('M19 7V3l2-2 2 2v4M19 5h4', 'red', 'none', 2),
  arrow: p('M2 21L18 6', '#000', 'none', 2) + p('M11 3h11v10z', '#000', '#000'), line: p('M2 21L21 4', '#000', 'none', 2), rect: r(2, 5, 20, 14, '#a0a0a0', '#222', 2),
  hand: p('M7 22l-5-8 3-1 3 3V6q2-2 3 0V4q2-2 3 0v1q2-1 3 1v2q2-1 3 1v8l-3 6z', '#000', '#fff') + p('M11 6v7M14 5v8M17 7v6', '#000', 'none', 1),
  formula: doc + p('M3 14h3l2 5 3-9h5M13 14h4v6h-4v-3h4', '#808', 'none', 1.5), minigraph: doc + p('M6 8v11h14M6 12h2M6 16h2M10 19v2M14 19v2') + p('M8 17l4-6 4 5 4-3', 'red'),
  handaxis: p('M7 18l-5-6 3-1 3 2V5q2-2 3 0V3q2-2 3 0v1q2-1 3 1v9l-3 4z', '#000', '#fff') + p('M20 1v22M1 20h22M17 6h6M17 13h6M6 20v3M12 20v3'),
  rotatecube: p('M8 6l5-5h10v17l-5 5H8z', '#600', '#e22') + p('M8 6h10v17M18 6l5-5', '#600') + p('M1 12q5-6 12 0V8l6 6-6 6v-4q-8 1-12-4z', '#22c', '#22f', 1),
  colorbars: r(0, 1, 24, 4, '#e22') + r(0, 7, 24, 4, '#ee0') + r(0, 13, 24, 4, '#22e') + r(0, 19, 24, 4, '#083'), rings: c(12, 12, 11, '#fff', '#444') + c(12, 15, 7, '#fff', '#444') + c(12, 19, 3, '#fff', '#444'),
  legendbc: p('M1 23V1h22v22') + p('M3 8h8') + p('M3 17h8', '#00f') + c(7, 17, 2.5, '#00f') + t(17, 11, 10, 'B', '#000', bold) + t(17, 21, 10, 'C', '#000', bold),
  starbox: p('M1 23V12h22v11M11 1v9M6 5h10M7 2l8 7M15 2L7 9'), scalebox: r(4, 1, 14, 23, '#fff', '#000') + p('M9 3v6M6 6h6M15 5h2M15 10h2M15 15h2M15 20h2M6 13h6M9 10v6M8 20h3', '#000', 'none', 2),
  clock: c(9, 9, 8, '#fff', '#000') + p('M9 4v6h4') + stamp, stampfolder: p('M1 18V3l2-2h6l2 2h8v15z', '#880', '#ee0') + stamp, grid: r(2, 5, 20, 14, '#fff', '#000', 2) + p('M7 5v14M12 5v14M17 5v14M2 10h20M2 14h20'),
  antialias: r(14, 1, 9, 4, '#000') + r(7, 6, 10, 4, '#000') + r(17, 6, 6, 4, '#bbb') + r(1, 12, 10, 4, '#000') + r(11, 12, 11, 4, '#888') + r(1, 18, 7, 4, '#333') + r(8, 18, 6, 4, '#ccc'),
  axes1: p('M4 20V3M4 20h17M4 20L17 6M1 6l3-4 3 4M18 17l4 3-4 3M12 5l6-1-1 6', 'red', 'none', 2), axes2: p('M4 1v19L17 5') + p('M4 20h17M18 17l4 3-4 3', 'red', 'none', 2), axes3: p('M4 20h19M4 20L19 5') + p('M4 20V3M1 6l3-4 3 4', 'red', 'none', 2),
  exchange: p('M1 8l8 9M9 8l-8 9M14 8l4 4 4-4M18 12v5', '#000', 'none', 2) + p('M6 5q6-6 12 0M18 1v4h-4M18 20q-6 5-12 0M6 23v-4h4', '#000', 'none', 2),
  runner: p('M2 2v20h21') + p('M1 5h3M1 9h3M1 13h3M1 17h3M6 22v2M11 22v2M16 22v2') + c(19, 4, 2.5, '#000') + p('M17 6l-7-2-3 3M17 6l-4 6 5 2-1 5M13 12l-4 5H5M17 8l2 3h4', '#000', 'none', 2.5),
  lay1: r(1, 1, 22, 22, '#fff', '#000', 2) + p('M5 3v6h14M5 14v6h5M14 14v6h5'), lay2: r(1, 1, 22, 9, '#fff', '#000', 2) + r(1, 14, 9, 9, '#fff', '#000', 2) + r(14, 14, 9, 9, '#fff', '#000', 2) + p('M6 4v3h4M14 4v3h4M4 17v3h4M17 17v3h4'),
  lay3: r(1, 14, 22, 9, '#fff', '#000', 2) + r(1, 1, 9, 9, '#fff', '#000', 2) + r(14, 1, 9, 9, '#fff', '#000', 2) + p('M4 4v3h4M17 4v3h4M6 17v3h4M14 17v3h4'),
  laystack: r(1, 1, 22, 7, '#fff', '#00c') + p('M1 5l4-2 4 3 5-3 8 3', 'red', 'none', 2) + r(1, 11, 15, 9, '#fff', '#00c') + r(4, 13, 16, 9, '#fff', '#00c') + r(7, 15, 16, 8, '#fff', '#000'),
};
/* one axis frame per button: left, top, right, bottom switched on or off */
const frame = on => ['M3 3v18', 'M3 3h18', 'M21 3v18', 'M3 21h18'].map((d, i) => p(d, on[i] ? '#000' : '#aaa', 'none', on[i] ? 2 : 1) + p(d, on[i] ? '#000' : '#aaa', 'none', 5).replace('/>', ' stroke-dasharray="1 3"/>')).join('');
const greyCorner = p('M3 4v17h19', '#aaa', 'none', 1) + p('M3 4v17h19', '#aaa', 'none', 5).replace('/>', ' stroke-dasharray="1 3"/>');
const blackCorner = p('M12 3v8h10', '#000', 'none', 2) + p('M12 3v8h10', '#000', 'none', 5).replace('/>', ' stroke-dasharray="2 2"/>');
Object.assign(icons, {
  fr1: p('M4 2v19h19', '#000', 'none', 2) + p('M6 5h2M6 9h2M6 13h2M9 18v2M13 18v2M17 18v2'), fr2: frame([0, 1, 0, 0]), fr3: frame([0, 0, 1, 0]), fr4: frame([1, 1, 1, 1]),
  fr5: greyCorner + blackCorner, fr6: greyCorner + blackCorner + p('M15 9l3-5 4 4', 'red', 'none', 2),
});
const bx = (...a) => a.map(b => r(b[0], b[1], b[2], b[3], b[4] || '#fff', '#222')).join('');
const dash = d => p(d, '#222').replace('/>', ' stroke-dasharray="3 2"/>');
Object.assign(icons, {
  al1: bx([6, 2, 10, 8], [6, 13, 17, 9]) + dash('M2 1v22'), al2: bx([8, 2, 9, 8], [2, 13, 15, 9]) + dash('M21 1v22'), al3: bx([2, 5, 8, 17], [14, 5, 8, 10]) + dash('M1 1h22'), al4: bx([2, 1, 8, 17], [14, 6, 8, 12]) + dash('M1 22h22'),
  al5: bx([7, 3, 10, 6], [4, 13, 16, 8]) + dash('M12 0v24'), al6: bx([4, 8, 7, 8], [14, 4, 8, 16]) + dash('M1 12h23'), al7: bx([5, 2, 11, 8], [8, 14, 11, 8]) + dash('M1 1v10M19 1v10M4 13v10M22 13v10'), al8: bx([2, 5, 8, 11], [14, 8, 8, 12]) + dash('M1 1h11M1 20h9M13 4h10M13 23h10'),
  al9: bx([1, 6, 5, 12], [10, 3, 5, 18], [19, 10, 4, 4]), al10: bx([10, 1, 4, 4], [4, 9, 16, 5], [7, 18, 10, 5]), front: bx([1, 1, 10, 10, '#bbb'], [13, 13, 10, 10, '#bbb'], [6, 5, 12, 12]), back: bx([6, 5, 12, 12], [1, 1, 10, 9, '#bbb'], [13, 13, 10, 9, '#bbb']),
  d1: bx([7, 6, 11, 12]) + p('M1 4v16M4 7v10M20 7v10M23 4v16', '#222').replace('/>', ' stroke-dasharray="1 3"/>'), d2: bx([7, 6, 11, 12]) + p('M1 4v16M4 7v10M20 7v10M23 4v16M10 9l5 6M15 9l-5 6', '#222').replace('/>', ' stroke-dasharray="1 3"/>'),
  group: bx([3, 3, 12, 12], [9, 9, 12, 12]) + [[1, 1], [19, 1], [1, 19], [19, 19]].map(a => r(a[0], a[1], 4, 4, '#222')).join(''), ungroup: bx([3, 3, 12, 12], [9, 9, 12, 12]) + [[1, 1], [13, 1], [1, 13], [7, 7], [19, 7], [7, 19], [19, 19]].map(a => r(a[0], a[1], 4, 4, '#222')).join(''),
  pline: p('M2 22L20 3', '#000', 'none', 1.5), pscatter: r(3, 18, 3, 3, '#000') + r(8, 11, 3, 3, '#000') + r(14, 14, 3, 3, '#000') + r(18, 5, 3, 3, '#000'), plinesym: p('M3 20l7-7 4-1 7-9') + r(1, 18, 4, 4, '#000') + r(8, 11, 4, 4, '#000') + r(18, 2, 4, 4, '#000'),
  pcolumn: r(1, 8, 6, 15, 'red', '#500') + r(8, 2, 7, 21, 'red', '#500') + r(16, 8, 6, 15, 'red', '#500') + p('M4 9v14M11 3v20M19 9v14'), pmulti: r(1, 1, 22, 22, '#fff', '#000') + p('M3 8l6-4 4 7 8-5M3 20l8-10 10 11', '#00c', 'none', 1.5) + p('M3 3l18 18'),
  pbox: p('M12 1v22M6 1h12M6 23h12', 'red', 'none', 2) + r(5, 7, 14, 10, '#fff', 'red', 2) + p('M5 12h14', 'red', 'none', 3), parea: p('M1 23V7l6 7 5-8 5 8 6-4v13z', 'none', 'red') + p('M8 16l5-10 6 10z', 'none', '#0e0') + p('M1 23l8-6 5 1 9-5v10z', 'none', '#000'),
  ppolar: p('M2 1v22M4 2h4M4 22h4') + c(13, 12, 9, '#fff', '#000') + p('M11 17V9q3-4 6 0M13 12h4'), pcandle: p('M6 2v20M18 2v20', '#c00', 'none', 2) + r(2, 6, 7, 11, '#fff', '#000', 2) + r(14, 4, 7, 14, 'red'),
  pbook: cubeF('#ee8', '#552', '#bb6') + p('M6 12l7 6', '#552', 'none', 2), p3dbar: cubeF('#eee', '#222', '#99b') + p('M7 12v9M12 6v14', '#33a', 'none', 3), p3dsurf: p('M2 17l6-12h13l-5 12z', '#333', '#4c4') + p('M4 13h14M6 9h14', '#e80', 'none', 3) + p('M2 17v5h14l5-8V5', '#333'),
  p3dscat: cubeF('#fff', '#333') + [[7, 12], [12, 16], [8, 18], [14, 7], [18, 11]].map(a => c(a[0], a[1], 1.8, '#22e')).join(''), pcontour: r(1, 1, 22, 22, '#2e2') + [[6, 6], [17, 6], [6, 17], [17, 17]].map(a => c(a[0], a[1], 4, '#fe0') + c(a[0], a[1], 2, 'red')).join(''),
  pwave: p('M1 11q3-16 6-4t6-4 9 5', 'red', 'none', 2) + r(1, 12, 22, 11, '#4d4') + c(6, 18, 3, 'red') + c(17, 18, 3, 'red'), pimage: r(1, 1, 22, 22, '#c33') + c(14, 9, 8, '#3b3') + p('M8 22l7-12 8 12z', 'none', '#22c'),
  mask1: mask + r(2, 18, 20, 5, 'red'), mask2: mask + p('M2 2l20 20M22 2L2 22', 'red', 'none', 3), mask3: p('M4 3l4 3h8l4-3v11q-4 8-8 8t-8-8z', '#222', '#ee0') + p('M4 14q4 8 8 8t8-8z', '#222', '#2ad') + c(9, 10, 1.5, '#222') + c(15, 10, 1.5, '#222'),
  swap1: dots3('#888'), swap2: dots3('red'), swap3: dots3('#000'),
  rotl: p('M9 1h6v14H9z', '#400', '#e00') + p('M1 13h5q1 6 9 5 6-2 6-8l3 1q0 11-11 12Q3 22 1 13z', '#22c', '#22e'), rotr: p('M9 1h6v14H9z', '#400', '#e00') + p('M23 13h-5q-1 6-9 5-6-2-6-8l-3 1q0 11 11 12 9-1 12-10z', '#22c', '#22e'),
  tiltl: p('M3 3h6l4 18H8z', '#400', '#e00') + p('M11 8l6-5v3h6v4h-6v3z', '#22c', '#22e'), tiltr: p('M15 3h6v20h-4z', '#400', '#e00') + p('M13 8L7 3v3H1v4h6v3z', '#22c', '#22e'),
  up: p('M5 12h14l4 7H1z', '#400', '#e00') + r(1, 19, 22, 4, '#c00') + p('M12 2l5 6h-3v6h-4V8H7z', '#22c', '#22e'), down: p('M1 1h22v5l-5 5H6L1 6z', '#400', '#e00') + p('M12 9l5 6h-3v8h-4v-8H7z', '#22c', '#22e'),
  persp: p('M8 3h8l5 10H3z', '#22c', '#ccf') + r(2, 14, 20, 9, '#e00', '#400'), box: cubeF('#e22', '#400', '#faa'), fit: p('M2 2l20 20M22 2L2 22', '#22e', 'none', 4) + r(7, 7, 10, 10, '#fff', '#22c') + p('M1 7V1h6M17 1h6v6M23 17v6h-6M7 23H1v-6', '#22c', 'none', 3),
  orient: p('M6 8l5-5h9v10l-5 5H6z', '#400', '#e22') + p('M1 23l8-9M13 9V1M16 16h8', '#22c', 'none', 2.5), cube: r(2, 5, 15, 17, 'none', '#22c', 2) + p('M7 8l4-4h11v13l-4 4', '#22c', 'none', 2) + r(6, 9, 10, 10, '#e22', '#400'),
});

const combo = (cls, label, value, lead = '') => `<span class="combo ${cls}">${lead}<select aria-label="${label}"><option>${value}</option></select></span>`;
const widgets = {
  zoom: combo('zoom', '缩放', '100%'),
  font: combo('font', '字体', '默认: 宋体', `<svg viewBox="0 0 24 20">${t(7, 14, 17, 'T', '#777')}${t(15, 19, 19, 'T', '#000', bold)}</svg>`),
  size: combo('mid', '字号', '0'), width: combo('mid', '线宽', '0'), width2: combo('mid', '大小', '0'), ten: combo('mid', '角度', '10'),
  line: combo('mid line', '线型', '实线', '<svg viewBox="0 0 29 20"><path d="M0 10h29" stroke="#000" stroke-width="4"/></svg>'),
  swatch: '<span class="swatch"></span><span class="drop wide"></span>',
};
const cap = '<span class="cap"><svg viewBox="0 0 10 12"><path d="M1 1h8v2H1zM1 6h8l-4 5z"/></svg></span>';

document.querySelectorAll('[data-items]').forEach(bar => {
  bar.innerHTML = '<i class="grip"></i>' + bar.dataset.items.split(' ').map(item => {
    if (item === '|') return '<i class="sep"></i>';
    if (item[0] === '@') return widgets[item.slice(1)];
    const name = item.match(/^\w+/)[0];
    const state = item.includes('!') ? ' on' : item.includes('~') ? ' off' : '';
    const drop = item.includes('>>') ? '<span class="drop wide"></span>' : item.includes('>') ? '<span class="drop"></span>' : '';
    return `<button class="tool${state}" aria-label="${name}"><svg viewBox="0 0 24 24">${icons[name]}</svg></button>${drop}`;
  }).join('') + cap;
});

document.querySelectorAll('.panel-tools').forEach(el => {
  el.innerHTML = [['菜单', 'M1 6h14l-7 6z', '#000'], ['固定', 'M5 2h6v7H5zM2 9.500h12M8 10v5M10 2v7', 'none'], ['关闭', 'M2 2l12 12M14 2L2 14', 'none']]
    .map(([n, d, f]) => `<button aria-label="${n}"><svg viewBox="0 0 16 16"><path d="${d}" fill="${f}" stroke="#000" stroke-width="2"/></svg></button>`).join('');
});

/* worksheet */
const data = [['A', 'B', 'C', 'D'], ['0.11839', '0.0812', '0.06737', '0.04839'], ['0.19736', '0.1452', '0.12556', '0.09681'], ['0.28736', '0.21556', '0.1939', '0.15471'], ['0.38685', '0.3049', '0.2764', '0.2083'], ['0.45902', '0.39429', '0.3689', '0.29258']];
const cells = (vals, cls = '') => [0, 1, 2, 3].map(i => `<td class="${cls}${i === 3 ? ' sel' : ''}">${vals[i] || ''}</td>`).join('');
let rows = ['长名称', '单位', '注释'].map(n => `<tr class="label"><th class="cjk">${n}</th>${cells([])}</tr>`).join('') + `<tr class="label fx"><th>F(x)=</th>${cells([])}</tr>`;
for (let n = 1; n <= 44; n++) rows += `<tr><th>${n}</th>${cells(data[n - 1] || [], n === 1 ? 'txt' : '')}</tr>`;
document.getElementById('rows').innerHTML = rows;

/* Weibull probability plots */
const graphs = {
  A: { name: 'Graph1', k: 2.60396, lam: 0.32753, view: [1067, 231, 575, 442], white: 670, fr: [1168, 293, 1559, 608], x0: -2, px0: 1168, dec: 169.6, y99: 322.7, u: 41.9, box: [1240, 239, 262, 39], tb: [256, 274], fs: [16, 13, 13, 11], lg: [1171, 292, 121, 65, 303, 14.7], yl: [1119, 451], xl: [1363, 651], tl: 630 },
  B: { name: 'Graph2', k: 2.20761, lam: 0.25865, view: [1584, 299, 619, 485], white: 772, fr: [1692, 366, 2114, 705], x0: -2, px0: 1755.6, dec: 155.9, y99: 397.8, u: 45.2, box: [1771, 308, 283, 42], tb: [326, 345], fs: [18, 15, 14, 12], lg: [1696, 365, 130, 70, 377, 16], yl: [1640, 535], xl: [1903, 752], tl: 728 },
  C: { name: 'Graph3', k: 2.05519, lam: 0.23381, view: [698, 750, 551, 421], white: 1168, fr: [794, 809, 1169, 1111], x0: -2, px0: 881.3, dec: 124.9, y99: 837, u: 40.2, box: [864, 757, 253, 39], tb: [774, 790], fs: [16, 13, 13, 11], lg: [798, 808, 116, 61, 818.5, 14.2], yl: [747, 960], xl: [982, 1151], tl: 1131 },
  D: { name: 'Graph4', k: 1.98503, lam: 0.18118, view: [1293, 877, 517, 408], white: 1270, fr: [1383, 933, 1734, 1215], x0: -3, px0: 1383.4, dec: 119.1, y99: 959.3, u: 37.6, box: [1449, 884, 235, 35], tb: [899, 914], fs: [15, 12, 12, 10], lg: [1386, 932, 108, 58, 942, 13.4], yl: [1339, 1072], xl: [1558, 1253], tl: 1233 },
};
/* confidence band half width for a standardised quantile w */
const half95 = w => 1.96 * Math.sqrt((1.052 + .681 * w * w - .542 * w) / 5);
const bound = sign => Array.from({ length: 60 }, (_, i) => { const w = -4.6 + 6.127 * i / 59; return [w + sign * half95(w), w]; });
const wb = q => Math.log(-Math.log(1 - q));

Object.entries(graphs).forEach(([id, g], col) => {
  const [l, top, rt, bot] = g.fr;
  const X = v => g.px0 + (Math.log10(v) - g.x0) * g.dec;
  const Y = w => g.y99 + (1.527 - w) * g.u;
  const Z = ([z, w]) => [X(g.lam * Math.exp(z / g.k)), Y(w)];
  const fs = g.fs;
  const label = (x, y, s, anchor = 'middle', size = fs[3]) => `<text x="${x}" y="${y}" font-size="${size}" text-anchor="${anchor}">${s}</text>`;
  const cjk = (s, size) => `<tspan font-size="${size}">${s}</tspan>`;
  let s = r(g.view[0], g.view[1], g.view[2] + 10, g.white - g.view[1], '#fff');
  s += id === 'D' ? r(g.view[0], g.view[1], 30, 30, '#c0c0c0') : r(g.view[0] + 2, g.view[1] + 1, 29, 30, '#777') + r(g.view[0] + 3, g.view[1] + 1, 26, 27, '#c0c0c0');
  s += `<text class="layer-no" x="${g.view[0] + 16}" y="${g.view[1] + 24}" font-size="24" text-anchor="middle">1</text>`;
  const lx = g.view[0] + 8, ly = g.view[1] + 37;
  s += p(`M${lx + 4} ${ly + 8}v-5q5-5 9 0v5`, '#000', '#ccc', 2) + r(lx + 1, ly + 7, 15, 11, '#0f0', '#000', 2) + p(`M${lx + 5} ${ly + 9}l8 3-8 4z`, '#000', '#000', 1);
  const [bx0, by, bw, bh] = g.box;
  s += r(bx0 + 5, by + 4, bw - 1, bh, '#000') + r(bx0, by, bw, bh, '#fff', '#000', 1);
  const mid = bx0 + bw / 2 - 1;
  s += label(mid, g.tb[0], `${id}${cjk('的', fs[0])}Weibull${cjk('概率图', fs[0])}`, 'middle', fs[1]);
  s += label(mid, g.tb[1], `${cjk('形状', fs[2])} = ${g.k}\u00a0 ${cjk('刻度', fs[2])} = ${g.lam}`, 'middle', fs[3]);
  let fine = '', main = '', ticks = '';
  for (let e = -4; e <= 0; e++) for (let m = 1; m < 10; m++) {
    const x = Math.round(X(m * 10 ** e));
    if (x < l || x > rt) continue;
    ticks += `M${x} ${bot}v${m === 1 ? 6 : 3}`;
    if (x > l && x < rt) m === 1 ? main += `M${x} ${top}V${bot}` : fine += `M${x} ${top}V${bot}`;
    if (m === 1) s += label(x - 1, g.tl, e === 0 ? '1' : (10 ** e).toFixed(-e));
  }
  [99.9, 99, 90, 50, 10, 5, 1].forEach(q => {
    const y = Math.round(Y(wb(q / 100)));
    ticks += `M${l} ${y}h-7`; main += `M${l} ${y}H${rt}`;
    s += label(l - 10, y + 4, q, 'end');
  });
  s += `<g shape-rendering="crispEdges"><path d="${fine}" stroke="#c0c0c0" stroke-dasharray="1 1"/><path d="${main}" stroke="#b8b8b8" stroke-dasharray="2 2"/><path d="${ticks}" stroke="#000"/>${r(l, top, rt - l, bot - top, 'none', '#000', 1)}</g>`;
  s += p('M' + bound(-1).map(Z).join('L'), '#000', 'none', 1) + p('M' + bound(1).map(Z).join('L'), '#000', 'none', 1) + p(`M${Z([-2.78, -2.79])}L${Z([1.05, 1.04])}`, 'red', 'none', 1.2);
  for (let i = 1; i <= 5; i++) s += c(X(+data[i][col]), Y(wb((i - .375) / 5.25)), 4.5, 'none', '#00f', 1.2);
  const [gx, gy, gw, gh, first, step] = g.lg;
  const k = gw / 121;
  s += r(gx, gy, gw, gh, '#fff', '#000', 1) + c(gx + 16 * k, first, 4.5, 'none', '#00f', 1.2);
  ['百分位数', '参照线', '下限百分位数', '上限百分位数'].forEach((n, i) => {
    const y = first + i * step;
    if (i) s += p(`M${gx + 3} ${y}h${27 * k}`, i === 1 ? 'red' : '#000', 'none', 1.2);
    s += label(gx + 38 * k, y + 5, n, 'start', fs[2]);
  });
  s += `<text transform="translate(${g.yl[0] + 6} ${g.yl[1]}) rotate(-90)" text-anchor="middle" font-size="${fs[0]}">百分比</text>` + label(g.xl[0], g.xl[1], id, 'middle', fs[1] + 1);
  document.querySelector(`[data-graph="${id}"]`).innerHTML = `<header><svg class="mini"><use href="#i-graph"/></svg><h3>${g.name}</h3><span class="win-btns"></span></header><div class="page"><svg viewBox="${g.view.join(' ')}" preserveAspectRatio="xMinYMin slice">${s}</svg></div>`;
});

document.querySelectorAll('.win-btns').forEach(el => {
  el.innerHTML = [['最小化', 'M2 9h16v5H2z'], ['最大化', 'M2 2h16v16H2zM7 7v6h6V7z'], ['关闭', 'M2 2h5l3 4 3-4h5v3l-4 5 4 5v3h-5l-3-4-3 4H2v-3l4-5-4-5z']]
    .map(([n, d]) => `<button aria-label="${n}"><svg viewBox="0 0 20 20"><path d="${d}" fill="#f4f4f4" stroke="#555b66" stroke-width="1.500" fill-rule="evenodd"/></svg></button>`).join('');
});
```
